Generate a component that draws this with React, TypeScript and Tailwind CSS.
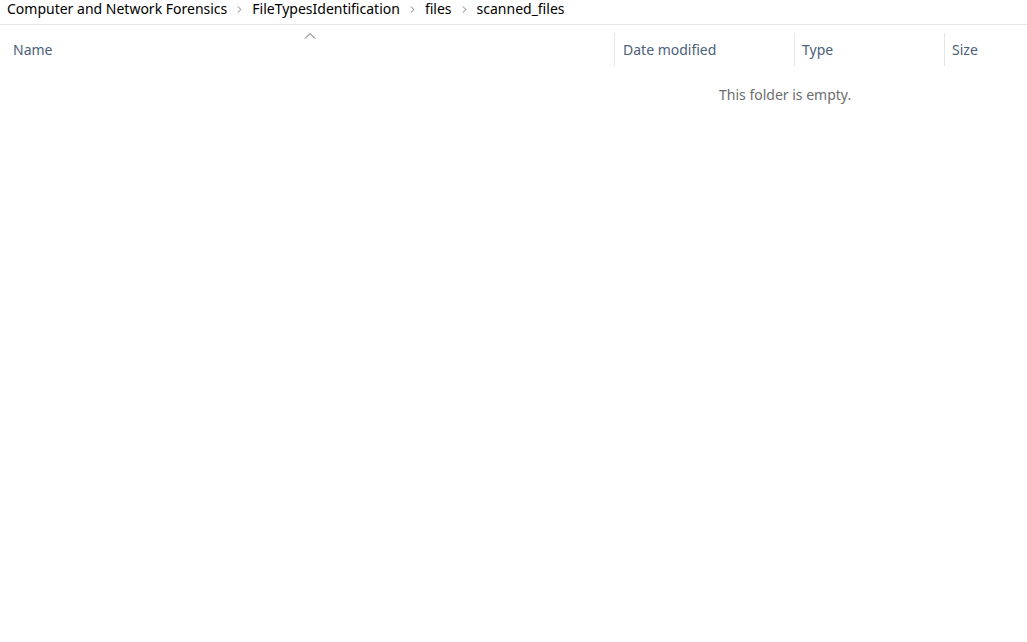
import { ChevronRight } from "lucide-react";

const crumbs = ["Computer and Network Forensics", "FileTypesIdentification", "files", "scanned_files"];

const App = () => {
  return (
    <div
      className="w-[1027px] h-[642px] bg-white overflow-hidden text-[14px]"
      style={{ fontFamily: '"Segoe UI", "Noto Sans", "Open Sans", sans-serif' }}
    >
      <div className="h-[25px] flex items-start pl-[7px] border-b border-[#e5e5e5] text-black">
        {crumbs.map((c, i) => (
          <div key={c} className="flex items-center h-[18px]">
            {i > 0 && <ChevronRight className="w-[11px] h-[11px] mx-[7px] text-[#444]" strokeWidth={1.5} />}
            <span className="leading-[18px]">{c}</span>
          </div>
        ))}
      </div>
      <div className="flex h-[41px] pt-[8px] text-[#4c607a]">
        <div className="relative w-[614px] flex items-center pl-[13px]">
          <span>Name</span>
          <svg
            className="absolute left-[304px] top-[-1px]"
            width="12"
            height="7"
            viewBox="0 0 12 7"
            fill="none"
            stroke="#5f5f5f"
            strokeWidth="1"
          >
            <path d="M1 6.5 L6 1.5 L11 6.5" />
          </svg>
        </div>
        <div className="w-[180px] flex items-center pl-[8px] border-l border-[#e5e5e5]">Date modified</div>
        <div className="w-[150px] flex items-center pl-[7px] border-l border-[#e5e5e5]">Type</div>
        <div className="flex-1 flex items-center pl-[7px] border-l border-[#e5e5e5]">Size</div>
      </div>
      <div className="pl-[719px] pt-[18px] text-[#6d6d6d]">This folder is empty.</div>
    </div>
  );
};

export default App;
